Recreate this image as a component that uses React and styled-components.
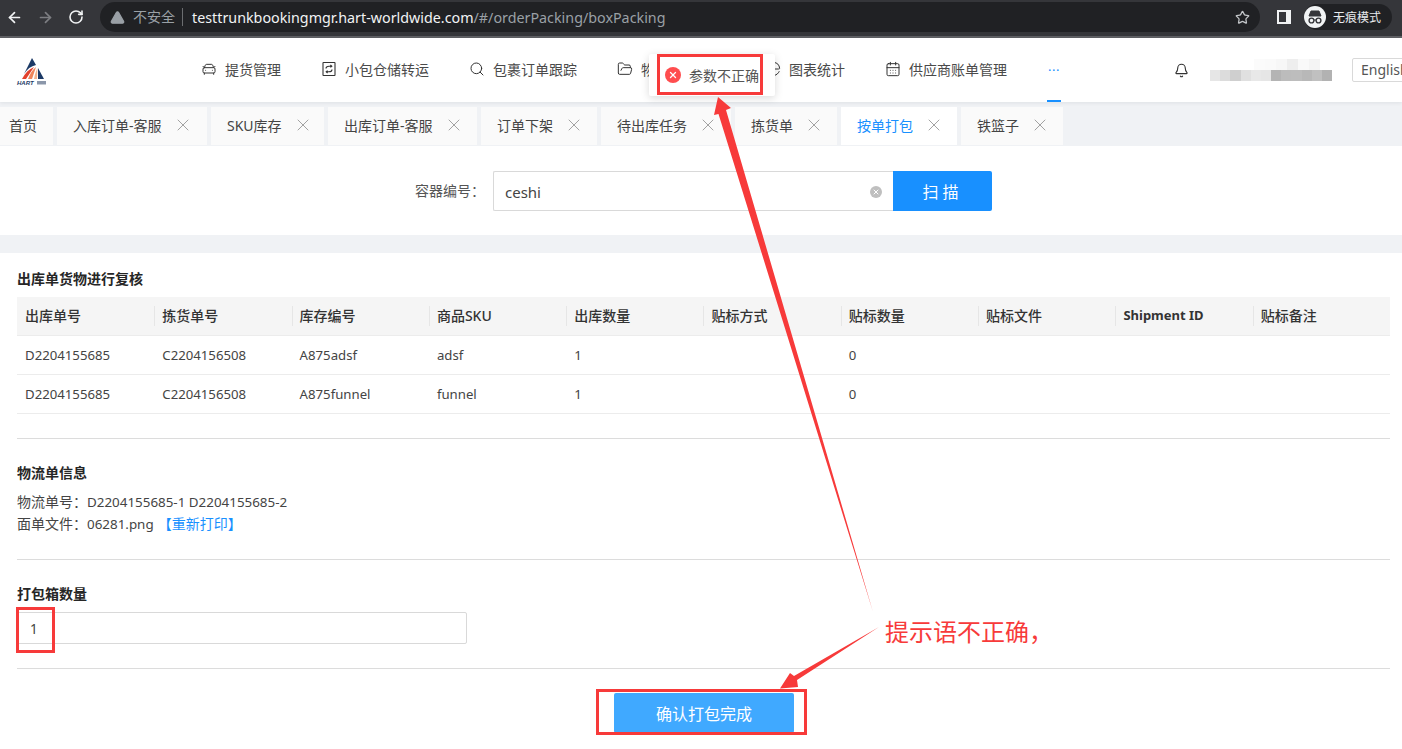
import React from "react";
import styled, { createGlobalStyle } from "styled-components";
import {
  ArrowLeft,
  ArrowRight,
  RotateCw,
  TriangleAlert,
  Star,
  CarFront,
  Search,
  FolderOpen,
  ChartPie,
  CalendarDays,
  Bell,
  X,
} from "lucide-react";

const FONT = `"Noto Sans", "Noto Sans CJK SC", sans-serif`;
const RED = "#f73a3a";

const GlobalStyle = createGlobalStyle`
  html, body {
    margin: 0;
    padding: 0;
    background: #fff;
    overflow: hidden;
  }
  * { box-sizing: border-box; }
`;

const Page = styled.div`
  position: relative;
  width: 1402px;
  height: 749px;
  overflow: hidden;
  font-family: ${FONT};
  font-size: 14px;
  color: #333;
`;

/* browser chrome */
const BrowserBar = styled.div`
  height: 38px;
  background: #35363a;
  border-bottom: 2px solid #5f6064;
  display: flex;
  align-items: center;
  padding: 0 8px 2px 6px;
`;

const NavButton = styled.span`
  width: 31px;
  display: flex;
  color: ${(p) => (p.$off ? "#7d7e82" : "#f1f3f4")};
`;

const AddressPill = styled.div`
  margin-left: 1px;
  width: 1160px;
  height: 30px;
  border-radius: 15px;
  background: #202124;
  display: flex;
  align-items: center;
  padding: 0 10px 0 10px;
  font-size: 14.3px;
  white-space: nowrap;
  color: #9aa0a6;
`;

const Insecure = styled.span`
  display: flex;
  align-items: center;
  gap: 8px;
  font-size: 14px;
  padding-right: 7px;
  border-right: 1px solid #6b6d70;
  line-height: 18px;
  margin-right: 9px;
`;

const Host = styled.span`
  color: #f1f3f4;
`;

const StarSlot = styled.span`
  margin-left: auto;
  display: flex;
  color: #c4c7ca;
`;

const SidePanelIcon = styled.span`
  margin-left: 17px;
  width: 14px;
  height: 14px;
  border: 2px solid #f1f3f4;
  border-right-width: 5px;
`;

const IncognitoChip = styled.div`
  margin-left: 13px;
  height: 26px;
  width: 88px;
  border-radius: 13px;
  background: #202124;
  display: flex;
  align-items: center;
  gap: 7px;
  color: #e8eaed;
  font-size: 12px;
  white-space: nowrap;
`;

const IncognitoFace = styled.span`
  width: 22px;
  height: 22px;
  border-radius: 50%;
  background: #f1f3f4;
  display: flex;
  align-items: center;
  justify-content: center;
`;

/* app header */
const Header = styled.header`
  height: 64px;
  background: #fff;
  display: flex;
  align-items: center;
  padding-left: 15px;
  box-shadow: 0 1px 4px rgba(0, 21, 41, 0.08);
  position: relative;
  white-space: nowrap;
`;

const Logo = styled.div`
  width: 34px;
  height: 32px;
  margin-right: 152px;
  display: flex;
`;

const Menu = styled.nav`
  display: flex;
  align-items: stretch;
  height: 100%;
  gap: 40px;
`;

const MenuItem = styled.div`
  display: flex;
  align-items: center;
  gap: 8px;
  padding-bottom: 2px;
  color: #4a4a4a;
  svg { flex: none; color: #333; }
`;

const MoreItem = styled.div`
  width: 14px;
  color: #1890ff;
  display: flex;
  align-items: center;
  justify-content: center;
  border-bottom: 2px solid #1890ff;
  font-size: 13px;
  line-height: 1;
  letter-spacing: 0.5px;
  padding-top: 3px;
`;

const BellSlot = styled.span`
  margin-left: 113px;
  display: flex;
  color: #333;
`;

const BlurName = styled.div`
  margin-left: 21px;
  width: 122px;
  display: flex;
  flex-direction: column;
`;

const BlurRow = styled.div`
  display: flex;
  padding-left: ${(p) => p.$indent || 0}px;
`;

const BlurCell = styled.span`
  width: 11px;
  height: 11px;
  background: ${(p) => p.$c};
`;

const LangBox = styled.div`
  margin-left: 20px;
  width: 70px;
  height: 24px;
  border: 1px solid #d9d9d9;
  border-radius: 2px;
  padding-left: 8px;
  line-height: 22px;
  font-size: 14px;
  color: #555;
  flex: none;
`;

/* tabs */
const TabStrip = styled.div`
  height: 44px;
  background: #f0f2f5;
  display: flex;
  align-items: flex-end;
  gap: 4px;
  padding-bottom: 1px;
  white-space: nowrap;
`;

const Tab = styled.div`
  height: 38px;
  display: flex;
  align-items: center;
  background: ${(p) => (p.$active ? "#fff" : "#fafafa")};
  color: ${(p) => (p.$active ? "#1890ff" : "#444")};
  padding: 0 0 2px ${(p) => (p.$home ? "9px" : "16px")};
  gap: 11px;
  width: ${(p) => p.$w}px;
  svg { color: #999; flex: none; }
`;

/* scan row */
const ScanRow = styled.section`
  height: 89px;
  background: #fff;
  display: flex;
  justify-content: center;
  padding: 25px 0 0 0;
`;

const ScanForm = styled.div`
  display: flex;
  margin-left: 5px;
  height: 40px;
`;

const ScanLabel = styled.label`
  line-height: 40px;
  margin-right: 8px;
  color: #555;
`;

const ScanInput = styled.div`
  width: 400px;
  height: 40px;
  border: 1px solid #d9d9d9;
  border-right: none;
  border-radius: 2px 0 0 2px;
  display: flex;
  align-items: center;
  justify-content: space-between;
  padding: 1px 11px 0 11px;
  font-size: 15px;
  color: #444;
`;

const ClearDot = styled.span`
  width: 12px;
  height: 12px;
  border-radius: 50%;
  background: #bfbfbf;
  color: #fff;
  display: flex;
  align-items: center;
  justify-content: center;
`;

const ScanButton = styled.button`
  width: 99px;
  height: 40px;
  border: none;
  border-radius: 0 2px 2px 0;
  background: #1890ff;
  color: #fff;
  font-family: inherit;
  font-size: 16px;
  letter-spacing: 4px;
`;

const GrayBand = styled.div`
  height: 18px;
  background: #f0f2f5;
`;

/* body */
const Content = styled.main`
  padding: 17px 12px 0 17px;
  background: #fff;
`;

const SectionTitle = styled.h3`
  margin: 0;
  height: 20px;
  font-size: 14px;
  font-weight: 700;
  line-height: 18px;
  color: #262626;
`;

const Table = styled.div`
  margin-top: 7px;
  display: grid;
  grid-template-columns: repeat(10, 137.3px);
`;

const HeadCell = styled.div`
  height: 39px;
  background: #f5f5f5;
  border-bottom: 1px solid #ececec;
  display: flex;
  align-items: center;
  padding: 0 0 2px 8px;
  font-size: ${(p) => (p.$latin ? "13px" : "14px")};
  font-weight: ${(p) => (p.$latin ? 700 : 500)};
  color: #333;
  position: relative;
  &:not(:first-child)::before {
    content: "";
    position: absolute;
    left: 0;
    top: 9px;
    height: 20px;
    width: 1px;
    background: #e6e6e6;
  }
`;

const BodyCell = styled.div`
  height: 39px;
  border-bottom: 1px solid #ececec;
  display: flex;
  align-items: center;
  padding-left: 8px;
  font-size: 13.2px;
  color: #444;
`;

const Rule = styled.hr`
  margin: ${(p) => p.$m};
  border: none;
  border-top: 1px solid #dcdcdc;
`;

const InfoBlock = styled.div`
  margin-top: 7px;
`;

const InfoLine = styled.div`
  line-height: 22px;
  color: #444;
`;

const Code = styled.span`
  font-size: 13.4px;
`;

const LinkText = styled.a`
  color: #1890ff;
  margin-left: 4px;
`;

const CountInput = styled.div`
  margin-top: 7px;
  width: 450px;
  height: 32px;
  border: 1px solid #d9d9d9;
  border-radius: 2px;
  padding-left: 12px;
  line-height: 32px;
  font-size: 13.5px;
  color: #444;
`;

const Actions = styled.div`
  display: flex;
  justify-content: center;
  padding-left: 1px;
`;

const ConfirmButton = styled.button`
  width: 180px;
  height: 40px;
  border: none;
  border-radius: 2px;
  background: #40a9ff;
  color: #fff;
  font-family: inherit;
  font-size: 16px;
`;

/* overlays */
const Toast = styled.div`
  position: absolute;
  left: 649px;
  top: 54px;
  width: 126px;
  height: 42px;
  background: #fff;
  border-radius: 2px;
  box-shadow: 0 2px 8px rgba(0, 0, 0, 0.15);
  display: flex;
  align-items: center;
  padding: 0 0 1px 16px;
  gap: 8px;
  color: #555;
  white-space: nowrap;
`;

const ToastIcon = styled.span`
  width: 16px;
  height: 16px;
  border-radius: 50%;
  background: #ff4d4f;
  color: #fff;
  display: flex;
  align-items: center;
  justify-content: center;
`;

const RedBox = styled.div`
  position: absolute;
  left: ${(p) => p.$x}px;
  top: ${(p) => p.$y}px;
  width: ${(p) => p.$w}px;
  height: ${(p) => p.$h}px;
  border: 3px solid ${RED};
  pointer-events: none;
`;

const ArrowLayer = styled.svg`
  position: absolute;
  left: 0;
  top: 0;
  pointer-events: none;
`;

const Callout = styled.div`
  position: absolute;
  left: 885px;
  top: 615px;
  font-size: 24px;
  line-height: 34px;
  color: ${RED};
  white-space: nowrap;
`;

// square with a small refresh loop, the icon of the warehouse menu item
const BoxRefresh = ({ size }) => (
  <svg width={size} height={size} viewBox="0 0 16 16" fill="none" stroke="currentColor" strokeWidth="1.1">
    <rect x="2" y="1.5" width="12" height="13" rx="0.5" />
    <path d="M5 7.5 C5 5.8 6.4 5.2 8 5.2 H10.6 M9.4 4 L10.8 5.2 L9.4 6.4" />
    <path d="M11 8.5 C11 10.2 9.6 10.8 8 10.8 H5.4 M6.6 9.6 L5.2 10.8 L6.6 12" />
  </svg>
);

const tabs = [
  { label: "首页", w: 53, home: true },
  { label: "入库订单-客服", w: 150 },
  { label: "SKU库存", w: 113 },
  { label: "出库订单-客服", w: 149 },
  { label: "订单下架", w: 116 },
  { label: "待出库任务", w: 130 },
  { label: "拣货单", w: 102 },
  { label: "按单打包", w: 116, active: true },
  { label: "铁篮子", w: 102 },
];

const menu = [
  { label: "提货管理", Icon: CarFront },
  { label: "小包仓储转运", Icon: BoxRefresh },
  { label: "包裹订单跟踪", Icon: Search },
  { label: "物流订单管理", Icon: FolderOpen },
  { label: "图表统计", Icon: ChartPie },
  { label: "供应商账单管理", Icon: CalendarDays },
];

const columns = ["出库单号", "拣货单号", "库存编号", "商品SKU", "出库数量", "贴标方式", "贴标数量", "贴标文件", "Shipment ID", "贴标备注"];

const rows = [
  ["D2204155685", "C2204156508", "A875adsf", "adsf", "1", "", "0", "", "", ""],
  ["D2204155685", "C2204156508", "A875funnel", "funnel", "1", "", "0", "", "", ""],
];

const blurTop = ["#fbfbfb", "#fafafa", "#f7f7f7", "#eeeeee", "#f9f9f9", "#f4f4f4"];
const blurBottom = ["#e6e6e6", "#dcdcdc", "#cfcfcf", "#e0e0e0", "#e8e8e8", "#e6e6e6", "#b4b4b4", "#bcbcbc", "#bdbdbd", "#b8b8b8", "#c0c0c0", "#b2b2b2"];

const HartLogo = () => (
  <svg width="34" height="32" viewBox="0 0 34 32">
    <path d="M17 4 L9 20 C12 15 16 12 21 11 Z" fill="#1c3a66" />
    <path d="M23 14 L29 25 L23 25 Z" fill="#1c3a66" />
    <path d="M7 25 C10 19 14 15 19 13 L11 25 Z" fill="#e2402c" />
    <path d="M13 25 C15 20 17 16 21 13 L17 25 Z" fill="#f0855a" />
    <path d="M19 25 C20 20 21 17 22.5 14 L22 25 Z" fill="#f4b48e" />
    <text x="2" y="31" fontFamily="Liberation Sans" fontSize="6" fontWeight="700" fontStyle="italic" fill="#1c3a66">HART</text>
    <rect x="22" y="27" width="9" height="3.5" fill="#8b97aa" />
  </svg>
);

const IncognitoGlyph = () => (
  <svg width="18" height="18" viewBox="0 0 18 18" fill="none" stroke="#35363a">
    <path d="M3 8 H15 L13 3 H5 Z" fill="#35363a" />
    <circle cx="5.5" cy="12.5" r="2.4" strokeWidth="1.4" />
    <circle cx="12.5" cy="12.5" r="2.4" strokeWidth="1.4" />
    <path d="M8 12 H10" strokeWidth="1.2" />
  </svg>
);

export default function App() {
  return (
    <Page>
      <GlobalStyle />
      <BrowserBar>
        <NavButton><ArrowLeft size={17} strokeWidth={2.4} /></NavButton>
        <NavButton $off><ArrowRight size={17} strokeWidth={2.4} /></NavButton>
        <NavButton><RotateCw size={16} strokeWidth={2.4} /></NavButton>
        <AddressPill>
          <Insecure>
            <TriangleAlert size={15} fill="#9aa0a6" color="#9aa0a6" />
            不安全
          </Insecure>
          <Host>testtrunkbookingmgr.hart-worldwide.com</Host>/#/orderPacking/boxPacking
          <StarSlot><Star size={15} strokeWidth={2} /></StarSlot>
        </AddressPill>
        <SidePanelIcon />
        <IncognitoChip>
          <IncognitoFace><IncognitoGlyph /></IncognitoFace>
          无痕模式
        </IncognitoChip>
      </BrowserBar>

      <Header>
        <Logo><HartLogo /></Logo>
        <Menu>
          {menu.map(({ label, Icon }) => (
            <MenuItem key={label}>
              <Icon size={16} strokeWidth={1.5} />
              {label}
            </MenuItem>
          ))}
          <MoreItem>···</MoreItem>
        </Menu>
        <BellSlot><Bell size={15} strokeWidth={1.8} /></BellSlot>
        <BlurName>
          <BlurRow $indent={44}>
            {blurTop.map((c, i) => (
              <BlurCell key={i} $c={c} />
            ))}
          </BlurRow>
          <BlurRow>
            {blurBottom.map((c, i) => (
              <BlurCell key={i} $c={c} />
            ))}
          </BlurRow>
        </BlurName>
        <LangBox>English</LangBox>
      </Header>

      <TabStrip>
        {tabs.map((t) => (
          <Tab key={t.label} $active={t.active} $home={t.home} $w={t.w}>
            {t.label}
            {!t.home && <X size={20} strokeWidth={1.1} />}
          </Tab>
        ))}
      </TabStrip>

      <ScanRow>
        <ScanForm>
          <ScanLabel>容器编号：</ScanLabel>
          <ScanInput>
            ceshi
            <ClearDot><X size={8} strokeWidth={3} /></ClearDot>
          </ScanInput>
          <ScanButton>扫描</ScanButton>
        </ScanForm>
      </ScanRow>
      <GrayBand />

      <Content>
        <SectionTitle>出库单货物进行复核</SectionTitle>
        <Table>
          {columns.map((c) => (
            <HeadCell key={c} $latin={c === "Shipment ID"}>{c}</HeadCell>
          ))}
          {rows.map((row, r) =>
            row.map((v, i) => <BodyCell key={`${r}-${i}`}>{v}</BodyCell>)
          )}
        </Table>
        <Rule $m="24px 0 25px" />
        <SectionTitle>物流单信息</SectionTitle>
        <InfoBlock>
          <InfoLine>物流单号：<Code>D2204155685-1 D2204155685-2</Code></InfoLine>
          <InfoLine>
            面单文件：<Code>06281.png</Code><LinkText>【重新打印】</LinkText>
          </InfoLine>
        </InfoBlock>
        <Rule $m="24px 0 25px" />
        <SectionTitle>打包箱数量</SectionTitle>
        <CountInput>1</CountInput>
        <Rule $m="24px 0 24px" />
        <Actions>
          <ConfirmButton>确认打包完成</ConfirmButton>
        </Actions>
      </Content>

      <Toast>
        <ToastIcon><X size={10} strokeWidth={3} /></ToastIcon>
        参数不正确
      </Toast>

      <ArrowLayer width="1402" height="749" viewBox="0 0 1402 749">
        <path d="M718 97 L731 108 L726 110 L873 612 L718.5 114 L714 115 Z" fill={RED} />
        <path d="M879 627 L797 680 L798 687 L780 688.5 L790 673 L794 676 Z" fill={RED} />
      </ArrowLayer>

      <RedBox $x={657} $y={54} $w={106} $h={41} />
      <RedBox $x={16} $y={607} $w={39} $h={46} />
      <RedBox $x={596} $y={689} $w={211} $h={46} />
      <Callout>提示语不正确，</Callout>
    </Page>
  );
}
